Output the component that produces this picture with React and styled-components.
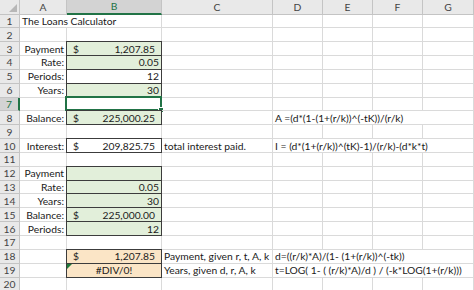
import React from 'react'
import styled, { createGlobalStyle } from 'styled-components'

const GlobalStyle = createGlobalStyle`
  html, body {
    margin: 0;
    padding: 0;
    background: #ffffff;
    overflow: hidden;
  }
  body {
    font-family: Lato, "Liberation Sans", sans-serif;
  }
`;

const COLS = ['A', 'B', 'C', 'D', 'E', 'F', 'G'];
const ACTIVE_COL = 'B';
const ACTIVE_ROW = 7;

const fills = {
    green: '#e2efda',
    peach: '#fbe5c6',
    none: 'transparent'
};

// sheet contents, keyed by row number
const rows = {
    1: [{ col: 'A', span: 2, text: 'The Loans Calculator' }],
    3: [
        { col: 'A', text: 'Payment', align: 'right' },
        { col: 'B', money: '1,207.85', fill: 'green', boxed: true }
    ],
    4: [
        { col: 'A', text: 'Rate:', align: 'right' },
        { col: 'B', text: '0.05', align: 'right', fill: 'green', boxed: true }
    ],
    5: [
        { col: 'A', text: 'Periods:', align: 'right' },
        { col: 'B', text: '12', align: 'right', boxed: true }
    ],
    6: [
        { col: 'A', text: 'Years:', align: 'right' },
        { col: 'B', text: '30', align: 'right', fill: 'green', boxed: true }
    ],
    7: [{ col: 'B', selected: true }],
    8: [
        { col: 'A', text: 'Balance:', align: 'right' },
        { col: 'B', money: '225,000.25', fill: 'green', boxed: true },
        { col: 'D', span: 4, text: 'A =(d*(1-(1+(r/k))^(-tK))/(r/k)' }
    ],
    10: [
        { col: 'A', text: 'Interest:', align: 'right' },
        { col: 'B', money: '209,825.75', boxed: true },
        { col: 'C', text: 'total interest paid.' },
        { col: 'D', span: 4, text: 'I  = (d*(1+(r/k))^(tK)-1)/(r/k)-(d*k*t)' }
    ],
    12: [
        { col: 'A', text: 'Payment', align: 'right' },
        { col: 'B', fill: 'green', boxed: true }
    ],
    13: [
        { col: 'A', text: 'Rate:', align: 'right' },
        { col: 'B', text: '0.05', align: 'right', fill: 'green', boxed: true }
    ],
    14: [
        { col: 'A', text: 'Years:', align: 'right' },
        { col: 'B', text: '30', align: 'right', fill: 'green', boxed: true }
    ],
    15: [
        { col: 'A', text: 'Balance:', align: 'right' },
        { col: 'B', money: '225,000.00', fill: 'green', boxed: true }
    ],
    16: [
        { col: 'A', text: 'Periods:', align: 'right' },
        { col: 'B', text: '12', align: 'right', fill: 'green', boxed: true }
    ],
    18: [
        { col: 'B', money: '1,207.85', fill: 'peach', boxed: true },
        { col: 'C', text: 'Payment, given r, t, A, k' },
        { col: 'D', span: 4, text: 'd=((r/k)*A)/(1- (1+(r/k))^(-tk))' }
    ],
    19: [
        { col: 'B', text: '#DIV/0!', align: 'center', fill: 'peach', boxed: true, error: true },
        { col: 'C', text: 'Years, given d, r, A, k' },
        { col: 'D', span: 4, text: 't=LOG( 1- ( (r/k)*A)/d ) / (-k*LOG(1+(r/k)))' }
    ]
};

function buildRow(r) {
    const given = rows[r] || [];
    const cells = [];
    let i = 0;
    while (i < COLS.length) {
        const found = given.find(c => c.col === COLS[i]);
        if (found) {
            cells.push(found);
            i += found.span || 1;
        } else {
            cells.push({ col: COLS[i] });
            i += 1;
        }
    }
    return cells;
}

function App() {
    const rowNumbers = Array.from({ length: 20 }, (_, i) => i + 1);
    return (
        <>
            <GlobalStyle />
            <Sheet>
                <Corner />
                {COLS.map(c => (
                    <ColHead key={c} $active={c === ACTIVE_COL}>{c}</ColHead>
                ))}
                {rowNumbers.map(r => (
                    <React.Fragment key={r}>
                        <RowHead $active={r === ACTIVE_ROW}>{r}</RowHead>
                        {buildRow(r).map(cell => (
                            <Cell
                                key={cell.col}
                                $span={cell.span || 1}
                                $align={cell.align || 'left'}
                                $fill={fills[cell.fill || 'none']}
                                $boxed={cell.boxed}
                            >
                                {cell.money ? (
                                    <>
                                        <span>$</span>
                                        <span>{cell.money}</span>
                                    </>
                                ) : cell.text}
                                {cell.error && <ErrorMark />}
                                {cell.selected && (
                                    <Selection>
                                        <FillHandle />
                                    </Selection>
                                )}
                            </Cell>
                        ))}
                    </React.Fragment>
                ))}
            </Sheet>
        </>
    )
}

export default App

const Sheet = styled.div`
    display: grid;
    grid-template-columns: 20px 47px 95px 111px 50px 50px 50px 51px;
    grid-template-rows: 14.5px repeat(20, 13.85px);
    width: 474px;
    height: 291.5px;
    font-size: 10.3px;
    color: #1a1a1a;
`;

const Corner = styled.div`
    position: relative;
    box-sizing: border-box;
    background: #e9e9e9;
    border-right: 1px solid #c4c4c4;
    border-bottom: 1px solid #c4c4c4;
    &::after {
        content: '';
        position: absolute;
        right: 2px;
        bottom: 2px;
        border-left: 8px solid transparent;
        border-bottom: 8px solid #b7b7b7;
    }
`;

const ColHead = styled.div`
    box-sizing: border-box;
    display: flex;
    align-items: center;
    justify-content: center;
    background: ${p => p.$active ? '#d3d3d3' : '#e9e9e9'};
    color: ${p => p.$active ? '#217346' : '#444'};
    border-right: 1px solid #c4c4c4;
    border-bottom: ${p => p.$active ? '2px solid #217346' : '1px solid #c4c4c4'};
    font-size: 10.3px;
`;

const RowHead = styled.div`
    box-sizing: border-box;
    display: flex;
    align-items: center;
    justify-content: center;
    background: ${p => p.$active ? '#d3d3d3' : '#e9e9e9'};
    color: ${p => p.$active ? '#217346' : '#444'};
    border-right: ${p => p.$active ? '2px solid #217346' : '1px solid #c4c4c4'};
    border-bottom: 1px solid #c4c4c4;
    font-size: 10.3px;
`;

const Cell = styled.div`
    position: relative;
    box-sizing: border-box;
    grid-column: span ${p => p.$span};
    display: flex;
    align-items: center;
    justify-content: ${p => p.$align === 'right' ? 'flex-end' : p.$align === 'center' ? 'center' : 'space-between'};
    padding: 0 2px 0 2px;
    white-space: nowrap;
    background: ${p => p.$fill};
    border-right: 1px solid ${p => p.$boxed ? '#3c3c3c' : '#dadada'};
    border-bottom: 1px solid ${p => p.$boxed ? '#3c3c3c' : '#dadada'};
    box-shadow: ${p => p.$boxed ? '0 -1px 0 #3c3c3c, -1px 0 0 #3c3c3c, -1px -1px 0 #3c3c3c' : 'none'};
    span:first-child {
        padding-left: 4px;
    }
    span:last-child {
        padding-right: 4px;
    }
`;

const Selection = styled.div`
    position: absolute;
    inset: -2px -1px -1px -2px;
    border: 2px solid #217346;
`;

const FillHandle = styled.div`
    position: absolute;
    right: -4px;
    bottom: -4px;
    width: 4px;
    height: 4px;
    background: #217346;
    border: 1px solid #fff;
`;

const ErrorMark = styled.div`
    position: absolute;
    left: 0;
    top: 0;
    border-top: 5px solid #1f7a3a;
    border-right: 5px solid transparent;
`;
